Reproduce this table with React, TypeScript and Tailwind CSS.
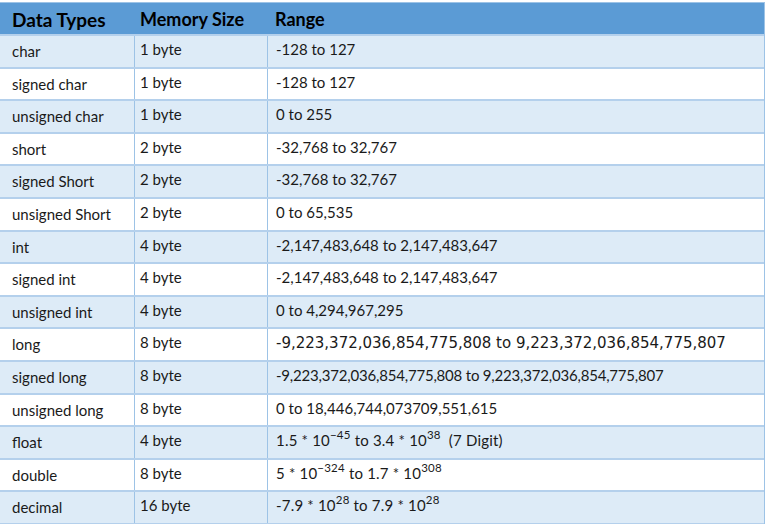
import React from "react";

type Row = {
  name: string;
  size: string;
  range: React.ReactNode;
};

const sup = (s: string) => <sup className="relative -top-[1px] text-[11.5px] align-super leading-none">{s}</sup>;

const rows: Row[] = [
  { name: "char", size: "1 byte", range: "-128 to 127" },
  { name: "signed char", size: "1 byte", range: "-128 to 127" },
  { name: "unsigned char", size: "1 byte", range: "0 to 255" },
  { name: "short", size: "2 byte", range: "-32,768 to 32,767" },
  { name: "signed Short", size: "2 byte", range: "-32,768 to 32,767" },
  { name: "unsigned Short", size: "2 byte", range: "0 to 65,535" },
  { name: "int", size: "4 byte", range: "-2,147,483,648 to 2,147,483,647" },
  { name: "signed int", size: "4 byte", range: "-2,147,483,648 to 2,147,483,647" },
  { name: "unsigned int", size: "4 byte", range: "0 to 4,294,967,295" },
  {
    name: "long",
    size: "8 byte",
    range: (
      <span className="font-[family-name:DejaVu_Sans,sans-serif] text-[15px]">
        -9,223,372,036,854,775,808 to 9,223,372,036,854,775,807
      </span>
    ),
  },
  {
    name: "signed long",
    size: "8 byte",
    range: <span className="tracking-[-0.2px]">-9,223,372,036,854,775,808 to 9,223,372,036,854,775,807</span>,
  },
  { name: "unsigned long", size: "8 byte", range: "0 to 18,446,744,073709,551,615" },
  {
    name: "float",
    size: "4 byte",
    range: (
      <span className="tracking-[0.2px]">
        1.5 * 10{sup("−45")} to 3.4 * 10{sup("38")}&nbsp; (7 Digit)
      </span>
    ),
  },
  {
    name: "double",
    size: "8 byte",
    range: (
      <span className="tracking-[0.2px]">
        5 * 10{sup("−324")} to 1.7 * 10{sup("308")}
      </span>
    ),
  },
  {
    name: "decimal",
    size: "16 byte",
    range: (
      <span className="tracking-[0.2px]">
        -7.9 * 10{sup("28")} to 7.9 * 10{sup("28")}
      </span>
    ),
  },
];

export default function App() {
  return (
    <div className="h-[524px] w-[768px] bg-white pt-[2px] font-[family-name:Lato,sans-serif] text-[15px] text-[#1a1a1a]">
      <div className="w-[765px] border-r border-[#9dc3e6]">
        <div className="grid h-[32px] grid-cols-[135px_133px_1fr] border-t border-[#9dc3e6] bg-[#5b9bd5] text-[18px] font-bold text-black">
          <div className="pl-3 pt-[3px] text-[19px]">Data Types</div>
          <div className="pl-[5px] pt-[3px]">Memory Size</div>
          <div className="pl-[7px] pt-[3px]">Range</div>
        </div>
        {rows.map((row, i) => (
          <div
            key={row.name}
            className={`grid h-[32.6px] grid-cols-[135px_133px_1fr] border-t-2 border-[#b4d0ec] ${
              i % 2 === 0 ? "bg-[#ddebf7]" : "bg-white"
            }`}
          >
            <div className="border-r border-[#9dc3e6] pl-3 pt-[4px]">{row.name}</div>
            <div className="border-r border-[#9dc3e6] pl-[5px] pt-[2px]">{row.size}</div>
            <div className="pl-[8px] pt-[2px] whitespace-nowrap">{row.range}</div>
          </div>
        ))}
        <div className="border-t-2 border-[#b4d0ec]" />
      </div>
    </div>
  );
}
